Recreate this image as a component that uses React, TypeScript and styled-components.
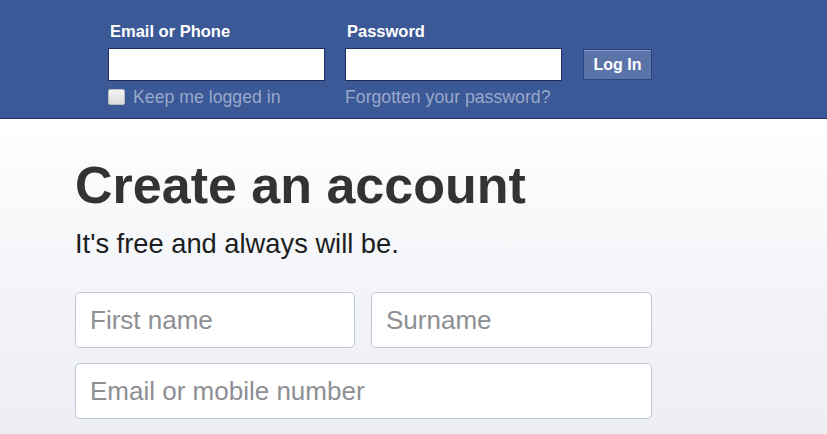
import styled, { createGlobalStyle } from "styled-components";

const GlobalStyle = createGlobalStyle`
    html, body {
        margin: 0;
        padding: 0;
        overflow: hidden;
        font-family: "Liberation Sans", Arial, sans-serif;
    }
`;

const Page = styled.div`
    display: flex;
    flex-direction: column;
    min-height: 100vh;
`;

const TopBar = styled.header`
    display: flex;
    gap: 20px;
    height: 119px;
    box-sizing: border-box;
    padding: 21px 0 0 108px;
    background-color: #3b5897;
    border-bottom: 1px solid #1f3463;
    box-shadow: 0 1px 0 #c9cfdb;
`;

const LoginField = styled.div`
    display: flex;
    flex-direction: column;
    width: 217px;
`;

const FieldLabel = styled.label`
    padding-left: 2px;
    font-size: 16.5px;
    line-height: 20px;
    font-weight: bold;
    color: #ffffff;
`;

const TopInput = styled.input`
    box-sizing: border-box;
    width: 217px;
    height: 33px;
    margin-top: 7px;
    border: 1px solid #1d2c5a;
    background: #ffffff;
    outline: none;
`;

const SubRow = styled.div`
    display: flex;
    align-items: center;
    gap: 8px;
    height: 20px;
    margin-top: 6px;
    font-size: 17.7px;
    color: #98a9ca;
`;

const Checkbox = styled.span`
    display: inline-block;
    box-sizing: border-box;
    width: 17px;
    height: 16px;
    border: 1px solid #b9bcc4;
    border-radius: 2px;
    background: linear-gradient(#f4f4f4, #dcdcdc);
`;

const LoginButton = styled.button`
    align-self: flex-start;
    width: 69px;
    height: 31px;
    padding: 0;
    margin: 28px 0 0 1px;
    border: 1px solid #2a4580;
    box-shadow: inset 0 1px 0 #8a9cc2;
    background-color: #5b74a8;
    color: #ffffff;
    font-family: "Liberation Sans", Arial, sans-serif;
    font-size: 16px;
    font-weight: bold;
`;

const Main = styled.main`
    flex: 1;
    padding: 36px 0 0 75px;
    background: linear-gradient(#ffffff 0px, #f4f5f8 150px, #eceef3 320px);
`;

const Title = styled.h1`
    margin: 0;
    font-size: 52px;
    line-height: 60px;
    font-weight: bold;
    color: #333333;
`;

const Subtitle = styled.p`
    margin: 13px 0 0;
    font-size: 27.3px;
    line-height: 32px;
    color: #1c1e21;
`;

const SignupGrid = styled.div`
    display: grid;
    grid-template-columns: 280px 281px;
    column-gap: 16px;
    row-gap: 15px;
    width: 577px;
    margin-top: 32px;
`;

const SignupInput = styled.input<{ $wide?: boolean }>`
    grid-column: ${(props) => (props.$wide ? "1 / 3" : "auto")};
    box-sizing: border-box;
    height: 56px;
    padding: 0 14px;
    border: 1px solid #bdc7d8;
    border-radius: 5px;
    background: #ffffff;
    font-family: "Liberation Sans", Arial, sans-serif;
    font-size: 26px;
    outline: none;

    &::placeholder {
        color: #8d8f94;
    }
`;

function App() {
    return (
        <Page>
            <GlobalStyle />
            <TopBar>
                <LoginField>
                    <FieldLabel>Email or Phone</FieldLabel>
                    <TopInput type="text" />
                    <SubRow>
                        <Checkbox />
                        Keep me logged in
                    </SubRow>
                </LoginField>
                <LoginField>
                    <FieldLabel>Password</FieldLabel>
                    <TopInput type="password" />
                    <SubRow>Forgotten your password?</SubRow>
                </LoginField>
                <LoginButton>Log In</LoginButton>
            </TopBar>
            <Main>
                <Title>Create an account</Title>
                <Subtitle>It's free and always will be.</Subtitle>
                <SignupGrid>
                    <SignupInput placeholder="First name" />
                    <SignupInput placeholder="Surname" />
                    <SignupInput $wide placeholder="Email or mobile number" />
                    <SignupInput $wide placeholder="New password" type="password" />
                </SignupGrid>
            </Main>
        </Page>
    );
}

export default App;
